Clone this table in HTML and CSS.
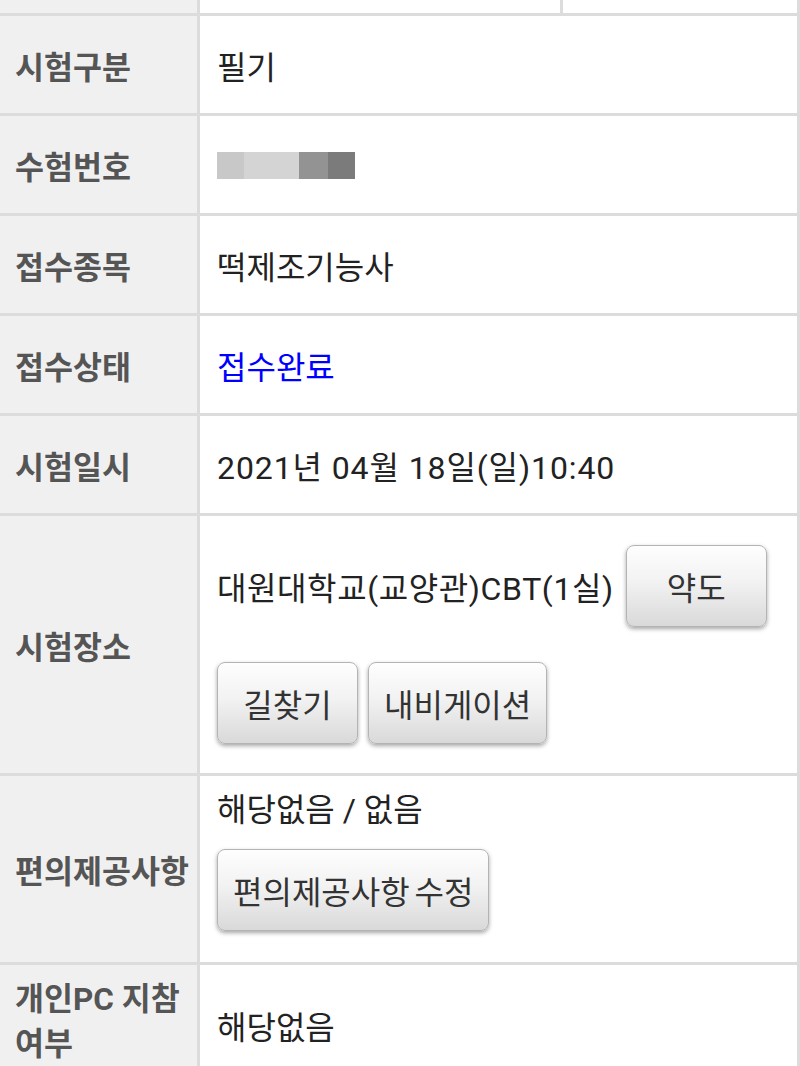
FILE: index.html
```html
<!DOCTYPE html>
<html lang="ko">
<head>
<meta charset="utf-8">
<link rel="stylesheet" href="styles.css">
</head>
<body>
<div class="info">
  <div class="label top"></div>
  <div class="value top split"><div class="sub"></div><div class="sub"></div></div>

  <div class="label">시험구분</div>
  <div class="value">필기</div>

  <div class="label">수험번호</div>
  <div class="value"><span class="mask"><i class="m1"></i><i class="m2"></i><i class="m3"></i><i class="m4"></i></span></div>

  <div class="label">접수종목</div>
  <div class="value">떡제조기능사</div>

  <div class="label">접수상태</div>
  <div class="value status">접수완료</div>

  <div class="label">시험일시</div>
  <div class="value date">2021년 04월 18일(일)10:40</div>

  <div class="label tall">시험장소</div>
  <div class="value place">
    <span class="place-name">대원대학교(교양관)CBT(1실)</span>
    <button class="btn wide">약도</button>
    <button class="btn wide">길찾기</button>
    <button class="btn">내비게이션</button>
  </div>

  <div class="label">편의제공사항</div>
  <div class="value conv">
    <div class="conv-text">해당없음 / 없음</div>
    <button class="btn">편의제공사항 수정</button>
  </div>

  <div class="label multi">개인PC 지참 여부</div>
  <div class="value">해당없음</div>
</div>
</body>
</html>
```

FILE: styles.css
```css
html, body {
  margin: 0;
  padding: 0;
  background: #ffffff;
}

body {
  font-family: "Roboto", "Noto Sans CJK KR", sans-serif;
  width: 800px;
  height: 1066px;
  overflow: hidden;
}

.info {
  display: grid;
  grid-template-columns: 197px 597px;
  grid-template-rows: 13px 97px 97px 97px 97px 97px 257px 186px 120px;
  gap: 3px;
  padding-right: 3px;
  background: #dcdcdc;
  width: 800px;
  box-sizing: border-box;
}

.label {
  background: #f0f0f0;
  color: #555555;
  font-weight: 700;
  font-size: 31.5px;
  display: flex;
  align-items: center;
  padding: 0 4px 0 15px;
}

.label.multi {
  line-height: 45px;
  align-items: flex-start;
  padding-top: 12px;
}

.value {
  background: #ffffff;
  color: #222222;
  font-size: 32px;
  display: flex;
  align-items: center;
  padding-left: 17px;
}

.value.top {
  padding: 0;
}

.value.split {
  display: grid;
  grid-template-columns: 360px 1fr;
  align-items: stretch;
  gap: 3px;
  background: #dcdcdc;
}

.sub {
  background: #ffffff;
}

.status {
  color: #0000ff;
}

.date {
  letter-spacing: 0.9px;
}

.mask {
  display: flex;
  height: 27px;
  margin-top: 1px;
}

.mask i {
  display: block;
  height: 27px;
}

.mask .m1 { width: 27px; background: #c8c8c8; }
.mask .m2 { width: 55px; background: #d4d4d4; }
.mask .m3 { width: 29px; background: #939393; }
.mask .m4 { width: 27px; background: #7b7b7b; }

.place {
  flex-wrap: wrap;
  align-content: center;
  column-gap: 10px;
  row-gap: 35px;
  padding-right: 20px;
}

.place-name {
  margin-right: 2px;
  letter-spacing: 0.6px;
}

.btn {
  font-family: "Roboto", "Noto Sans CJK KR", sans-serif;
  font-size: 32px;
  color: #333333;
  height: 82px;
  padding: 0 15px;
  word-spacing: -3px;
  border: 1px solid #b4b4b4;
  border-radius: 8px;
  background: linear-gradient(#fefefe 0%, #f2f2f2 45%, #d9d9d9 100%);
  box-shadow: 0 2px 4px rgba(0, 0, 0, 0.35);
}

.btn.wide {
  min-width: 141px;
}

.conv {
  flex-direction: column;
  align-items: flex-start;
  justify-content: flex-start;
  padding-top: 12px;
}

.conv-text {
  line-height: 44px;
  margin-bottom: 17px;
}
```
